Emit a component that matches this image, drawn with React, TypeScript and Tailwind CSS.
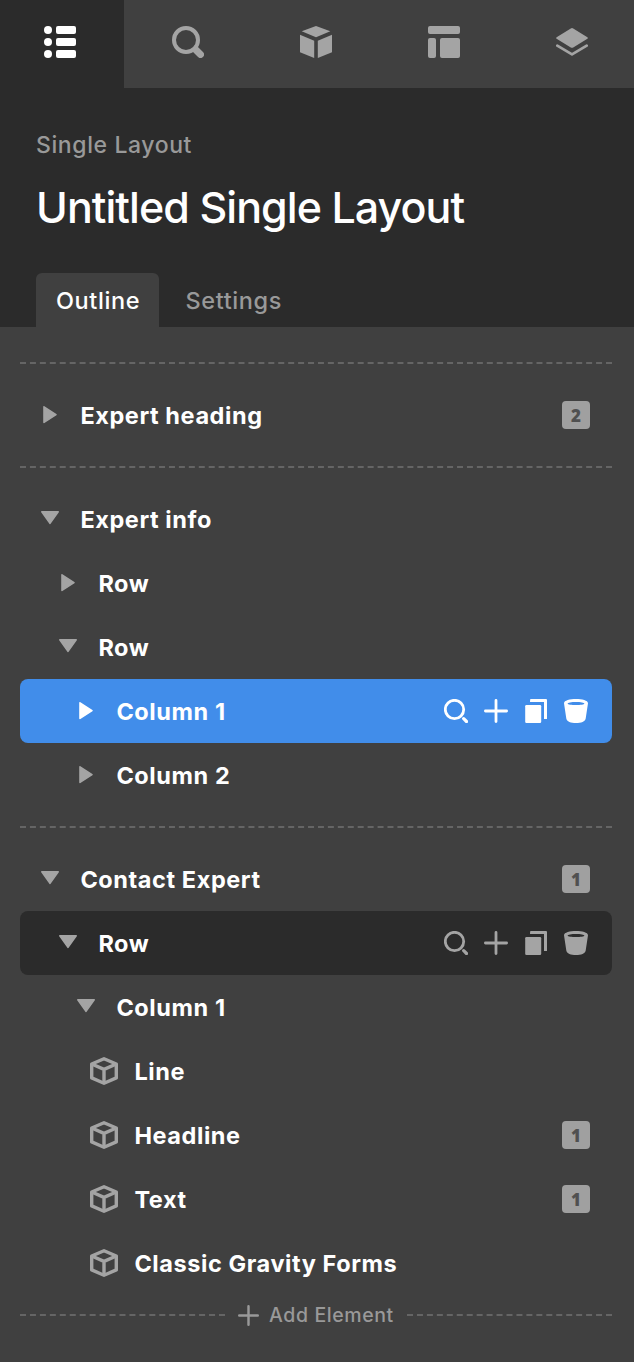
import type { ReactNode } from 'react';

type IconProps = { className?: string };

const ListIcon = () => (
  <svg width="32" height="32" viewBox="0 0 32 32" fill="currentColor">
    {[0, 12, 24].map((y) => (
      <g key={y}>
        <circle cx="4" cy={y + 4} r="4" />
        <rect x="12" y={y} width="20" height="8" rx="2" />
      </g>
    ))}
  </svg>
);

const SearchIcon = () => (
  <svg width="32" height="32" viewBox="0 0 32 32" fill="none" stroke="currentColor">
    <circle cx="14" cy="14" r="12" strokeWidth="4" />
    <path d="M24 24l4.5 4.5" strokeWidth="7" strokeLinecap="round" />
    <path d="M21.5 21.5l4 4" strokeWidth="4.5" />
  </svg>
);

const CubeIcon = () => (
  <svg width="32" height="32" viewBox="0 0 32 32" fill="currentColor">
    <path d="M16 0L30.3 5.3L16 11.2L1.7 5.3Z" />
    <path d="M0 8.8L14.2 14.8V32L0 26.2Z" />
    <path d="M32 8.8L17.8 14.8V32L32 26.2Z" />
  </svg>
);

const LayoutIcon = () => (
  <svg width="32" height="32" viewBox="0 0 32 32" fill="currentColor">
    <rect width="32" height="8" rx="2" />
    <rect y="12" width="8" height="20" rx="2" />
    <rect x="12" y="12" width="20" height="20" rx="2" />
  </svg>
);

const LayersIcon = () => (
  <svg width="32" height="32" viewBox="0 0 32 32" fill="currentColor">
    <path d="M14.8 2.4Q16 1.6 17.2 2.4L31.4 11.2Q32.3 12 31.4 12.8L17.2 21.4Q16 22.2 14.8 21.4L.6 12.8Q-.3 12 .6 11.2Z" />
    <path d="M1.3 19.6L16 28.3L30.7 19.6" fill="none" stroke="currentColor" strokeWidth="2.7" strokeLinecap="round" strokeLinejoin="round" />
  </svg>
);

const Arrow = ({ open, className }: { open: boolean; className: string }) => (
  <svg width="20" height="20" viewBox="0 0 20 20" fill="currentColor" stroke="currentColor" strokeWidth="1.6" strokeLinejoin="round" className={`shrink-0 ${className}`}>
    {open ? <path d="M1.8 2.8H18.2L10 14.4Z" /> : <path d="M4 1.8V17.4L16 9.7Z" />}
  </svg>
);

const BoxIcon = () => (
  <svg width="28" height="28" viewBox="0 0 28 28" fill="none" stroke="currentColor" strokeWidth="3.4" strokeLinejoin="round" className="shrink-0 text-[#a4a4a4]">
    <path d="M14 1.8L26.3 7V20.9L14 26.2L1.7 20.9V7Z" />
    <path d="M1.7 7L14 12.4L26.3 7M14 12.4V26.2" />
  </svg>
);

const ZoomAction = () => (
  <svg width="24" height="24" viewBox="0 0 24 24" fill="none" stroke="currentColor">
    <circle cx="10.5" cy="10.5" r="9.2" strokeWidth="2.8" />
    <path d="M19.7 19.7L22.5 22.5" strokeWidth="3.2" strokeLinecap="round" />
  </svg>
);

const PlusIcon = ({ className }: IconProps) => (
  <svg width="24" height="24" viewBox="0 0 24 24" fill="none" stroke="currentColor" strokeWidth="2.8" strokeLinecap="round" className={className}>
    <path d="M12 1.4V22.6M1.4 12H22.6" />
  </svg>
);

const CopyAction = () => (
  <svg width="24" height="24" viewBox="0 0 24 24" fill="currentColor">
    <rect x="1.2" y="6" width="16" height="18" rx="1.2" />
    <path d="M6.5 0H22Q23 0 23 1V20H20V3H6Q6 0 6.5 0Z" />
  </svg>
);

const TrashAction = () => (
  <svg width="24" height="24" viewBox="0 0 24 24" fill="currentColor" fillRule="evenodd">
    <path d="M12 0C18 0 24 1.4 24 4.2L21.7 19.5C21.3 22.6 17 24 12 24S2.7 22.6 2.3 19.5L0 4.2C0 1.4 6 0 12 0ZM12 2.9C7.5 2.9 3.6 3.6 3.6 4.5S7.5 6.1 12 6.1S20.4 5.4 20.4 4.5S16.5 2.9 12 2.9Z" />
  </svg>
);

const Actions = () => (
  <div className="flex gap-4">
    <ZoomAction />
    <PlusIcon />
    <CopyAction />
    <TrashAction />
  </div>
);

const Badge = ({ children }: { children: ReactNode }) => (
  <span className="mr-[-2px] flex size-7 items-center justify-center rounded-[4px] bg-[#a0a0a0] font-['Open_Sans',sans-serif] text-[17px] leading-none font-extrabold text-[#505050]">
    {children}
  </span>
);

type RowProps = {
  label: string;
  depth: 0 | 1 | 2 | 3;
  open?: boolean;
  count?: number;
  state?: 'selected' | 'hover';
};

const indents = ['pl-5', 'pl-[38px]', 'pl-14', 'pl-[70px]'];

const Row = ({ label, depth, open = false, count, state }: RowProps) => {
  const bg = state === 'selected' ? 'bg-[#418dea]' : state === 'hover' ? 'bg-[#2b2b2b]' : '';
  return (
    <div className={`flex h-16 items-center rounded-lg pr-6 ${indents[depth]} ${bg}`}>
      {depth === 3 ? (
        <BoxIcon />
      ) : (
        <Arrow open={open} className={state === 'selected' ? 'text-white' : 'text-[#a4a4a4]'} />
      )}
      <span className={`grow pt-0.5 text-[23.5px] font-[650] tracking-[0.58px] whitespace-nowrap text-white ${depth === 3 ? 'pl-[16.4px]' : 'pl-[20.4px]'}`}>
        {label}
      </span>
      {count !== undefined && <Badge>{count}</Badge>}
      {state && (
        <div className={state === 'selected' ? 'text-white' : 'text-[#a4a4a4]'}>
          <Actions />
        </div>
      )}
    </div>
  );
};

const Divider = ({ className = '' }: IconProps) => (
  <div className={`border-t-2 border-dashed border-[#656565] ${className}`} />
);

export default function App() {
  return (
    <div className="flex h-[1362px] w-[634px] flex-col overflow-hidden bg-[#404040] font-[Inter,sans-serif]">
      <nav className="flex h-[88px] shrink-0 bg-[#404040] text-[#a4a4a4]">
        <div className="flex w-[124px] bg-[#2b2b2b] pt-[26px] pl-11 text-white"><ListIcon /></div>
        <div className="w-32 pt-[26px] pl-12"><SearchIcon /></div>
        <div className="w-32 pt-[26px] pl-12"><CubeIcon /></div>
        <div className="w-32 pt-[26px] pl-12"><LayoutIcon /></div>
        <div className="pt-[26px] pl-12"><LayersIcon /></div>
      </nav>

      <header className="flex h-[239px] shrink-0 flex-col bg-[#2b2b2b] px-9 pt-[41px]">
        <p className="h-8 text-[23px] leading-8 font-[450] tracking-[0.6px] whitespace-nowrap text-[#999999]">Single Layout</p>
        <h1 className="mt-[18px] h-14 text-[43px] leading-14 font-medium tracking-[-0.95px] whitespace-nowrap text-white">
          Untitled Single Layout
        </h1>
        <div className="mt-auto flex h-[54px] text-[23.5px] leading-[55px] font-[450] tracking-[0.6px]">
          <div className="w-[123px] rounded-t-md bg-[#404040] pl-5 text-white">Outline</div>
          <div className="pl-[26.5px] text-[#999999]">Settings</div>
        </div>
      </header>

      <main className="flex flex-col pt-[35px] pr-[22px] pl-5">
        <Divider className="mb-[19px]" />
        <Row label="Expert heading" depth={0} count={2} />
        <Divider className="my-[19px]" />
        <Row label="Expert info" depth={0} open />
        <Row label="Row" depth={1} />
        <Row label="Row" depth={1} open />
        <Row label="Column 1" depth={2} state="selected" />
        <Row label="Column 2" depth={2} />
        <Divider className="my-[19px]" />
        <Row label="Contact Expert" depth={0} open count={1} />
        <Row label="Row" depth={1} open state="hover" />
        <Row label="Column 1" depth={2} open />
        <Row label="Line" depth={3} />
        <Row label="Headline" depth={3} count={1} />
        <Row label="Text" depth={3} count={1} />
        <Row label="Classic Gravity Forms" depth={3} />
        <div className="flex h-10 items-center text-[#999999]">
          <Divider className="w-[205px]" />
          <PlusIcon className="ml-[13px] size-[21px]" />
          <span className="ml-2.5 w-[138px] pt-0.5 text-[19.5px] font-[450] tracking-[0.6px] whitespace-nowrap">Add Element</span>
          <Divider className="w-[205px]" />
        </div>
      </main>
    </div>
  );
}
